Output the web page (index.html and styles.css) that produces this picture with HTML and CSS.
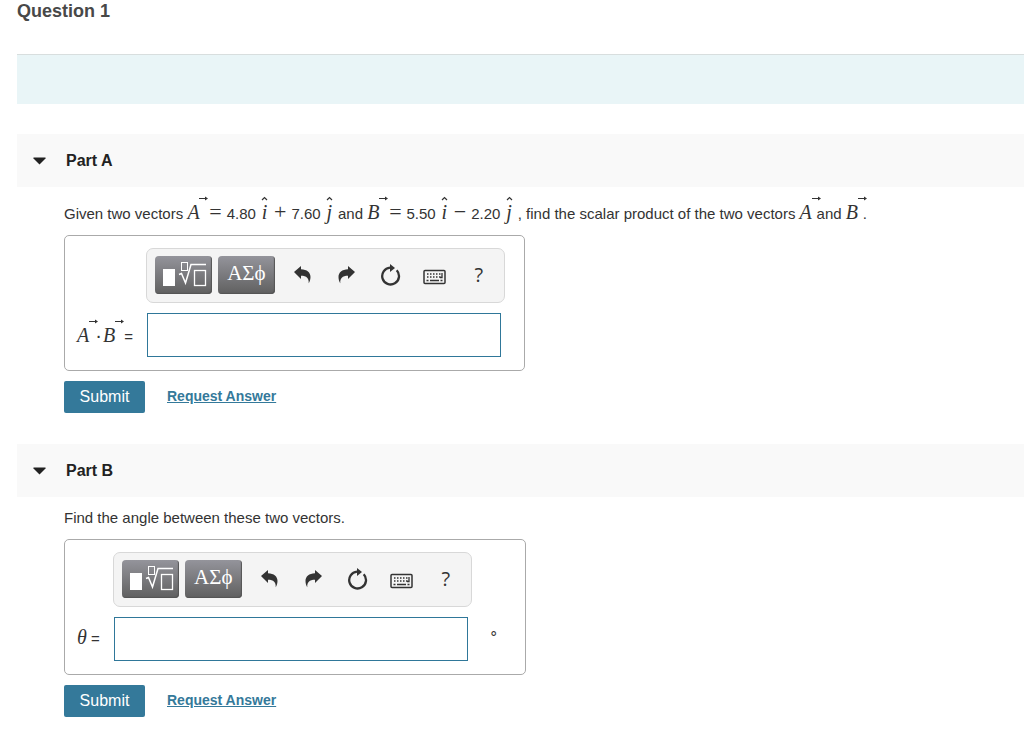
FILE: index.html
```html
<!DOCTYPE html>
<html lang="en">
<head>
    <meta charset="utf-8">
    <title>Question 1</title>
    <link rel="stylesheet" href="styles.css">
</head>
<body>
    <!-- shared icons -->
    <svg class="sprite" aria-hidden="true">
        <symbol id="caret" viewBox="0 0 13 8">
            <path d="M.5 .5h12v1l-6 6-6-6z"/>
        </symbol>
        <symbol id="templates" viewBox="0 0 57 38">
            <rect x="8" y="13" width="12" height="17" fill="#fff"/>
            <g fill="none" stroke="#fff">
                <rect x="26.5" y="6.5" width="6" height="8"/>
                <path d="M24 18.5l2.500-1 4 9.500L36 8.500h15" stroke-width="1.500"/>
                <rect x="39.5" y="14.5" width="11" height="15" stroke-width="1.300"/>
            </g>
        </symbol>
        <symbol id="undo" viewBox="0 0 24 24">
            <path d="M3 10L10 4v3.300C16 7.500 19.500 10.500 19.500 15c0 2.500-.8 4.700-1.800 6.200.4-4.800-2-7.400-7.700-7.400V17z"/>
        </symbol>
        <symbol id="redo" viewBox="0 0 24 24">
            <path d="M20 10L13 4v3.300C7 7.500 3.500 10.500 3.500 15c0 2.500.8 4.700 1.800 6.200-.4-4.800 2-7.400 7.700-7.400V17z"/>
        </symbol>
        <symbol id="reset" viewBox="0 0 24 24">
            <path d="M17.700 8.300A8.400 8.400 0 1 1 11 5.700" fill="none" stroke="#333" stroke-width="2.300"/>
            <path d="M11 2l5 4-5 4z"/>
        </symbol>
        <symbol id="keyboard" viewBox="0 0 24 24">
            <rect x="1" y="8.500" width="21" height="13" rx="1" fill="none" stroke="#333" stroke-width="1.500"/>
            <path d="M4 12h13.500M4 15h13.500" fill="none" stroke="#333" stroke-width="1.500" stroke-dasharray="1.500 1.500"/>
            <path d="M3.500 18.500h2M7 18.500h9M17.500 18.500h2M19 11v4.500h-2" fill="none" stroke="#333" stroke-width="1.300"/>
        </symbol>
        <symbol id="arrow" viewBox="0 0 9 5">
            <path d="M0 2h6V.5l3 2-3 2V3H0z"/>
        </symbol>
        <symbol id="hat" viewBox="0 0 9 5">
            <path d="M2 4l2.500-2.500L7 4" fill="none" stroke="#333" stroke-width="1.200"/>
        </symbol>
    </svg>

    <main class="question">
        <h1>Question 1</h1>
        <div class="banner"></div>

        <section class="part">
            <h2><button type="button" class="part-toggle"><svg class="caret"><use href="#caret"/></svg>Part A</button></h2>
            <div class="part-body">
                <p>Given two vectors <span class="vec">A<svg><use href="#arrow"/></svg></span> <span class="op">=</span> 4.80 <span class="unit">i<svg><use href="#hat"/></svg></span> <span class="op">+</span> 7.60 <span class="unit">j<svg><use href="#hat"/></svg></span> and <span class="vec">B<svg><use href="#arrow"/></svg></span> <span class="op">=</span> 5.50 <span class="unit">i<svg><use href="#hat"/></svg></span> <span class="op">−</span> 2.20 <span class="unit">j<svg><use href="#hat"/></svg></span> , find the scalar product of the two vectors <span class="vec">A<svg><use href="#arrow"/></svg></span>and <span class="vec">B<svg><use href="#arrow"/></svg></span>.</p>
                <div class="answer-box">
                    <div class="toolbar">
                        <button type="button" class="menu-btn" aria-label="Templates"><svg><use href="#templates"/></svg></button>
                        <button type="button" class="menu-btn symbols">ΑΣϕ</button>
                        <button type="button" class="tool" aria-label="Undo"><svg><use href="#undo"/></svg></button>
                        <button type="button" class="tool" aria-label="Redo"><svg><use href="#redo"/></svg></button>
                        <button type="button" class="tool" aria-label="Reset"><svg><use href="#reset"/></svg></button>
                        <button type="button" class="tool" aria-label="Keyboard shortcuts"><svg><use href="#keyboard"/></svg></button>
                        <button type="button" class="tool">?</button>
                    </div>
                    <label for="answer-a"><span class="vec">A<svg><use href="#arrow"/></svg></span><span class="dot">·</span><span class="vec">B<svg><use href="#arrow"/></svg></span> =</label>
                    <input type="text" id="answer-a">
                </div>
                <div class="actions">
                    <button type="button" class="submit">Submit</button>
                    <a href="#">Request Answer</a>
                </div>
            </div>
        </section>

        <section class="part">
            <h2><button type="button" class="part-toggle"><svg class="caret"><use href="#caret"/></svg>Part B</button></h2>
            <div class="part-body">
                <p>Find the angle between these two vectors.</p>
                <div class="answer-box">
                    <div class="toolbar">
                        <button type="button" class="menu-btn" aria-label="Templates"><svg><use href="#templates"/></svg></button>
                        <button type="button" class="menu-btn symbols">ΑΣϕ</button>
                        <button type="button" class="tool" aria-label="Undo"><svg><use href="#undo"/></svg></button>
                        <button type="button" class="tool" aria-label="Redo"><svg><use href="#redo"/></svg></button>
                        <button type="button" class="tool" aria-label="Reset"><svg><use href="#reset"/></svg></button>
                        <button type="button" class="tool" aria-label="Keyboard shortcuts"><svg><use href="#keyboard"/></svg></button>
                        <button type="button" class="tool">?</button>
                    </div>
                    <label for="answer-b"><span class="theta">θ</span> =</label>
                    <input type="text" id="answer-b">
                    <span class="degree">∘</span>
                </div>
                <div class="actions">
                    <button type="button" class="submit">Submit</button>
                    <a href="#">Request Answer</a>
                </div>
            </div>
        </section>
    </main>
</body>
</html>
```
FILE: styles.css
```css
* {
    box-sizing: border-box;
}
body {
    margin: 0;
    font-family: "Liberation Sans", Arial, sans-serif;
    font-size: 15px;
    line-height: 18px;
    color: #333;
    background: #fff;
}
button {
    font-family: inherit;
    color: inherit;
    border: none;
    padding: 0;
    cursor: pointer;
}
svg {
    fill: #333;
}
.sprite {
    display: none;
}
.question {
    padding-left: 17px;
}
h1 {
    margin: 0 0 32px;
    font-size: 18px;
    line-height: 22px;
    color: #484848;
}
.banner {
    height: 50px;
    margin-bottom: 30px;
    border-top: 1px solid #d8dede;
    background: #e9f5f7;
}
.part {
    margin-bottom: 31px;
}
h2 {
    margin: 0;
    background: #f9f9f9;
}
.part-toggle {
    display: flex;
    align-items: center;
    gap: 20px;
    width: 100%;
    height: 53px;
    padding-left: 16px;
    background: none;
    font-size: 16px;
    font-weight: bold;
    color: #222;
}
.caret {
    width: 13px;
    height: 8px;
    fill: #222;
}
.part-body {
    padding-left: 47px;
}
p {
    margin: 0;
    padding: 12px 0;
}

/* math */
.vec, .unit, .op, .theta {
    display: inline-block;
    font-family: "Liberation Serif", serif;
    font-size: 20px;
}
.vec, .unit {
    position: relative;
    padding-top: 4px;
    font-style: italic;
}
.vec {
    width: 17px;
}
.unit {
    width: 9px;
    text-align: center;
}
.op {
    width: 14px;
    font-size: 22px;
    text-align: center;
}
.theta {
    font-style: italic;
}
.vec svg, .unit svg {
    position: absolute;
    top: -3px;
    width: 9px;
    height: 5px;
}
.vec svg {
    right: -4px;
}
.unit svg {
    right: 0;
}
.dot {
    display: inline-block;
    width: 9px;
    font-size: 20px;
    text-align: center;
}

.answer-box {
    display: grid;
    grid-template-columns: auto auto auto;
    column-gap: 13px;
    row-gap: 10px;
    align-items: center;
    width: fit-content;
    padding: 12px 6px 13px 12px;
    border: 1px solid #aaa;
    border-radius: 5px;
}
.toolbar {
    grid-column: 2;
    display: flex;
    align-items: center;
    padding: 7px 3px 8px 8px;
    border: 1px solid #d8d8d8;
    border-radius: 7px;
    background: #f4f4f4;
}
.menu-btn {
    width: 57px;
    height: 38px;
    margin-right: 6px;
    border-radius: 4px;
    background: linear-gradient(#94949b, #606060);
    box-shadow: inset -1px -1px 1px #555;
    font-family: "Liberation Serif", serif;
    font-size: 21px;
    color: #fff;
}
.menu-btn svg {
    display: block;
    width: 57px;
    height: 38px;
}
.symbols {
    padding-bottom: 3px;
}
.tool {
    display: flex;
    align-items: center;
    justify-content: center;
    width: 44px;
    height: 38px;
    padding-bottom: 2px;
    background: none;
    font-family: "Open Sans", sans-serif;
    font-size: 20px;
}
.tool svg {
    width: 24px;
    height: 24px;
}
.answer-box label {
    grid-column: 1;
    padding-bottom: 2px;
}
.answer-box input {
    width: 354px;
    height: 44px;
    margin-left: 1px;
    padding: 0 8px;
    border: 1px solid #2f7799;
    font-size: 16px;
}
.degree {
    width: 34px;
    padding: 0 0 12px 4px;
}

.actions {
    display: flex;
    align-items: center;
    gap: 22px;
    margin-top: 10px;
}
.submit {
    width: 81px;
    height: 32px;
    border-radius: 2px;
    background: #34799a;
    font-size: 16px;
    color: #fff;
}
.actions a {
    padding-bottom: 3px;
    font-weight: bold;
    font-size: 14px;
    color: #34799a;
}
```
